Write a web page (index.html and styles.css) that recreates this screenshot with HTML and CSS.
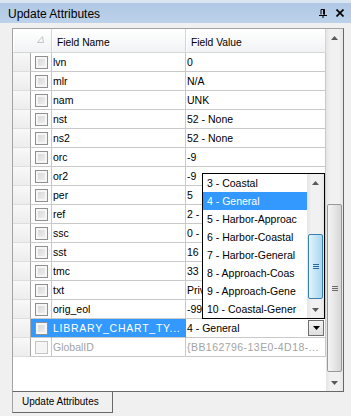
FILE: index.html
```html
<!DOCTYPE html>
<html>
<head>
<meta charset="utf-8">
<title>Update Attributes</title>
<link rel="stylesheet" href="styles.css">
</head>
<body>
<div class="window">
  <div class="titlebar">
    <span class="title">Update Attributes</span>
    <span class="tools">
      <svg class="pin" width="8" height="9" viewBox="0 0 8 9"><path d="M2 0.5H5.5V5.5M2 0.5V5.5" fill="none" stroke="#000" stroke-width="1"/><path d="M5 0.5V5.5" stroke="#000" stroke-width="2"/><path d="M0 6.5H8M4 6.5V9" stroke="#000" stroke-width="1"/></svg>
      <svg class="close" width="8" height="8" viewBox="0 0 8 8"><path d="M0.5 0.5L7.5 7.5M7.5 0.5L0.5 7.5" stroke="#000" stroke-width="1.7"/></svg>
    </span>
  </div>
  <div class="panel">
    <div class="grid">
      <div class="table">
        <div class="hdr">
          <div class="hc corner"><svg width="7" height="7" viewBox="0 0 7 7"><path d="M0.5 6.5L5.5 0.5L6.5 6.5Z" fill="none" stroke="#c4c4c4" stroke-width="1"/></svg></div>
          <div class="hc">Field Name</div>
          <div class="hc">Field Value</div>
        </div>
        <div class="row"><div class="rh"></div><div class="cb"><span class="box"></span></div><div class="name">lvn</div><div class="val">0</div></div>
        <div class="row"><div class="rh"></div><div class="cb"><span class="box"></span></div><div class="name">mlr</div><div class="val">N/A</div></div>
        <div class="row"><div class="rh"></div><div class="cb"><span class="box"></span></div><div class="name">nam</div><div class="val">UNK</div></div>
        <div class="row"><div class="rh"></div><div class="cb"><span class="box"></span></div><div class="name">nst</div><div class="val">52 - None</div></div>
        <div class="row"><div class="rh"></div><div class="cb"><span class="box"></span></div><div class="name">ns2</div><div class="val">52 - None</div></div>
        <div class="row"><div class="rh"></div><div class="cb"><span class="box"></span></div><div class="name">orc</div><div class="val">-9</div></div>
        <div class="row"><div class="rh"></div><div class="cb"><span class="box"></span></div><div class="name">or2</div><div class="val">-9</div></div>
        <div class="row"><div class="rh"></div><div class="cb"><span class="box"></span></div><div class="name">per</div><div class="val">5</div></div>
        <div class="row"><div class="rh"></div><div class="cb"><span class="box"></span></div><div class="name">ref</div><div class="val">2 -</div></div>
        <div class="row"><div class="rh"></div><div class="cb"><span class="box"></span></div><div class="name">ssc</div><div class="val">0 -</div></div>
        <div class="row"><div class="rh"></div><div class="cb"><span class="box"></span></div><div class="name">sst</div><div class="val">16</div></div>
        <div class="row"><div class="rh"></div><div class="cb"><span class="box"></span></div><div class="name">tmc</div><div class="val">33</div></div>
        <div class="row"><div class="rh"></div><div class="cb"><span class="box"></span></div><div class="name">txt</div><div class="val">Priv</div></div>
        <div class="row"><div class="rh"></div><div class="cb"><span class="box"></span></div><div class="name">orig_eol</div><div class="val">-99</div></div>
        <div class="row sel"><div class="rh"></div><div class="cb"><span class="box"></span></div><div class="name">LIBRARY_CHART_TY...</div><div class="val combo"><span>4 - General</span><span class="dropbtn"><svg width="7" height="4" viewBox="0 0 7 4"><path d="M0 0H7L3.5 4Z" fill="#000"/></svg></span></div></div>
        <div class="row dis"><div class="rh"></div><div class="cb"><span class="box"></span></div><div class="name">GlobalID</div><div class="val">{BB162796-13E0-4D18-...</div></div>
      </div>
      <div class="vscroll">
        <div class="arrow"><svg width="7" height="4" viewBox="0 0 7 4"><path d="M3.5 0L7 4H0Z" fill="#5a5a5a"/></svg></div>
        <div class="track-top"></div>
        <div class="thumb"><span class="grip"></span></div>
        <div class="track-bot"></div>
        <div class="arrow"><svg width="7" height="4" viewBox="0 0 7 4"><path d="M0 0H7L3.5 4Z" fill="#5a5a5a"/></svg></div>
      </div>
    </div>
    <div class="tabs"><div class="tab">Update Attributes</div></div>
  </div>

  <div class="popup">
    <div class="plist">
      <div class="item">3 - Coastal</div>
      <div class="item hi">4 - General</div>
      <div class="item">5 - Harbor-Approac</div>
      <div class="item">6 - Harbor-Coastal</div>
      <div class="item">7 - Harbor-General</div>
      <div class="item">8 - Approach-Coas</div>
      <div class="item">9 - Approach-Gene</div>
      <div class="item">10 - Coastal-Gener</div>
    </div>
    <div class="pscroll">
      <div class="parrow"><svg width="7" height="4" viewBox="0 0 7 4"><path d="M3.5 0L7 4H0Z" fill="#5a5a5a"/></svg></div>
      <div class="ptrack-top"></div>
      <div class="pthumb"><span class="pgrip"></span></div>
      <div class="ptrack-bot"></div>
      <div class="parrow"><svg width="7" height="4" viewBox="0 0 7 4"><path d="M0 0H7L3.5 4Z" fill="#5a5a5a"/></svg></div>
    </div>
  </div>
</div>
</body>
</html>
```
FILE: styles.css
```css
* { box-sizing: border-box; }

body {
  margin: 0;
  background: #f0f0f0;
  font-family: "Liberation Sans", Arial, sans-serif;
  font-size: 10.5px;
  color: #000;
}

.window {
  position: relative;
  width: 351px;
  height: 416px;
  overflow: hidden;
  background: #f0f0f0;
}

/* title bar */
.titlebar {
  height: 23px;
  border-top: 3px solid #dce6f2;
  background: linear-gradient(#afc8e4, #bdd2ea);
  display: flex;
  align-items: center;
  padding: 0 7px 0 8px;
}
.title {
  flex: 1;
  font-size: 12px;
  padding-top: 1px;
}
.tools {
  display: flex;
  align-items: center;
  gap: 9px;
}
.tools svg { display: block; }

/* panel */
.panel {
  padding: 5px 7px 0 12px;
}
.grid {
  display: flex;
  width: 332px;
  height: 364px;
  border: 1px solid;
  border-color: #a3a3a3 #686868 #686868 #a3a3a3;
  background: #fff;
}
.table {
  width: 313px;
}

/* header */
.hdr {
  display: grid;
  grid-template-columns: 39px 134px 140px;
  height: 24px;
  border-bottom: 1px solid #d5d5d5;
  background: linear-gradient(#ffffff, #f2f3f5);
}
.hc {
  border-right: 1px solid #d5d5d5;
  box-shadow: inset 1px 0 0 #fff;
  display: flex;
  align-items: center;
  padding: 3px 0 0 5px;
  font-size: 10.3px;
}
.hc.corner {
  justify-content: flex-end;
  padding: 0 7px 2px 0;
}
.hc.corner svg { display: block; }

/* rows */
.row {
  display: grid;
  grid-template-columns: 18px 21px 134px 140px;
  height: 19px;
}
.rh {
  background: linear-gradient(#f8f8f8, #ededed);
  border-bottom: 1px solid #dedede;
  border-right: 1px solid #a8a8a8;
}
.cb {
  border-right: 1px solid #c9c9c9;
  border-bottom: 1px solid #c9c9c9;
  display: flex;
  align-items: center;
  justify-content: center;
  padding-left: 1px;
}
.box {
  width: 13px;
  height: 13px;
  border: 1px solid #8f8f8f;
  background: linear-gradient(135deg, #d3d3d3, #f4f4f4);
  box-shadow: inset 0 0 0 2px #f6f6f6;
}
.name {
  border-right: 1px solid #c9c9c9;
  border-bottom: 1px solid #c9c9c9;
  padding-left: 1px;
  line-height: 18px;
  white-space: nowrap;
  overflow: hidden;
}
.val {
  border-right: 1px solid #c9c9c9;
  border-bottom: 1px solid #c9c9c9;
  padding-left: 1px;
  line-height: 18px;
  white-space: nowrap;
  overflow: hidden;
}

.row.sel .cb,
.row.sel .name {
  background: #3399ff;
  border-color: #3399ff;
  color: #fff;
}
.row.sel .cb { border-bottom-color: #c9c9c9; }
.row.sel .name {
  letter-spacing: 0.75px;
  border-bottom-color: #c9c9c9;
}
.val.combo {
  display: flex;
  align-items: center;
  justify-content: space-between;
  padding-right: 1px;
}
.dropbtn {
  width: 16px;
  height: 16px;
  border: 1px solid #6e6e6e;
  background: linear-gradient(#f4f4f4, #dedede);
  display: flex;
  align-items: center;
  justify-content: center;
}
.dropbtn svg { display: block; }

.row.dis .name,
.row.dis .val {
  color: #a3a3a3;
}
.row.dis .val { letter-spacing: 0.45px; }
.row.dis .box {
  border-color: #c4c4c4;
  background: #f4f4f4;
}

/* vertical scrollbar */
.vscroll {
  width: 17px;
  display: flex;
  flex-direction: column;
  background: linear-gradient(to right, #e4e4e4, #f1f1f1 25%, #f1f1f1 75%, #e6e6e6);
}
.arrow {
  height: 17px;
  display: flex;
  align-items: center;
  justify-content: center;
}
.arrow svg { display: block; }
.track-top { height: 158px; }
.thumb {
  height: 168px;
  margin: 0 1px;
  border: 1px solid #989898;
  border-radius: 2px;
  background: linear-gradient(to right, #f5f5f5, #e6e6e6 50%, #d6d6d6);
  display: flex;
  align-items: center;
  justify-content: center;
}
.grip {
  width: 6px;
  height: 5px;
  background: repeating-linear-gradient(#6a6a6a 0 1px, transparent 1px 2px);
}
.track-bot { height: 2px; }

/* tab */
.tabs { display: flex; }
.tab {
  width: 101px;
  height: 21px;
  border: 1px solid;
  border-top: none;
  border-color: #a3a3a3 #686868 #686868 #a3a3a3;
  background: #f0f0f0;
  padding-left: 9px;
  line-height: 19px;
  font-size: 10px;
}

/* dropdown popup */
.popup {
  position: absolute;
  left: 202px;
  top: 173px;
  width: 123px;
  height: 146px;
  border: 1px solid #000;
  background: #fff;
  display: flex;
}
.plist { width: 104px; }
.item {
  height: 18px;
  line-height: 18px;
  padding-left: 4px;
  font-size: 10.5px;
  white-space: nowrap;
  overflow: hidden;
}
.item.hi {
  background: #3399ff;
  color: #fff;
}
.pscroll {
  width: 17px;
  display: flex;
  flex-direction: column;
  background: linear-gradient(to right, #e4e4e4, #f1f1f1 25%, #f1f1f1 75%, #e6e6e6);
}
.parrow {
  height: 17px;
  display: flex;
  align-items: center;
  justify-content: center;
}
.parrow svg { display: block; }
.ptrack-top { height: 43px; }
.pthumb {
  height: 65px;
  margin: 0 1px;
  border: 1px solid #3c7fb1;
  border-radius: 2px;
  background: linear-gradient(to right, #e5f4fc, #c4e5f6 50%, #a8d8f2);
  display: flex;
  align-items: center;
  justify-content: center;
}
.pgrip {
  width: 6px;
  height: 5px;
  background: repeating-linear-gradient(#2d6a9a 0 1px, transparent 1px 2px);
}
.ptrack-bot { height: 2px; }
```
